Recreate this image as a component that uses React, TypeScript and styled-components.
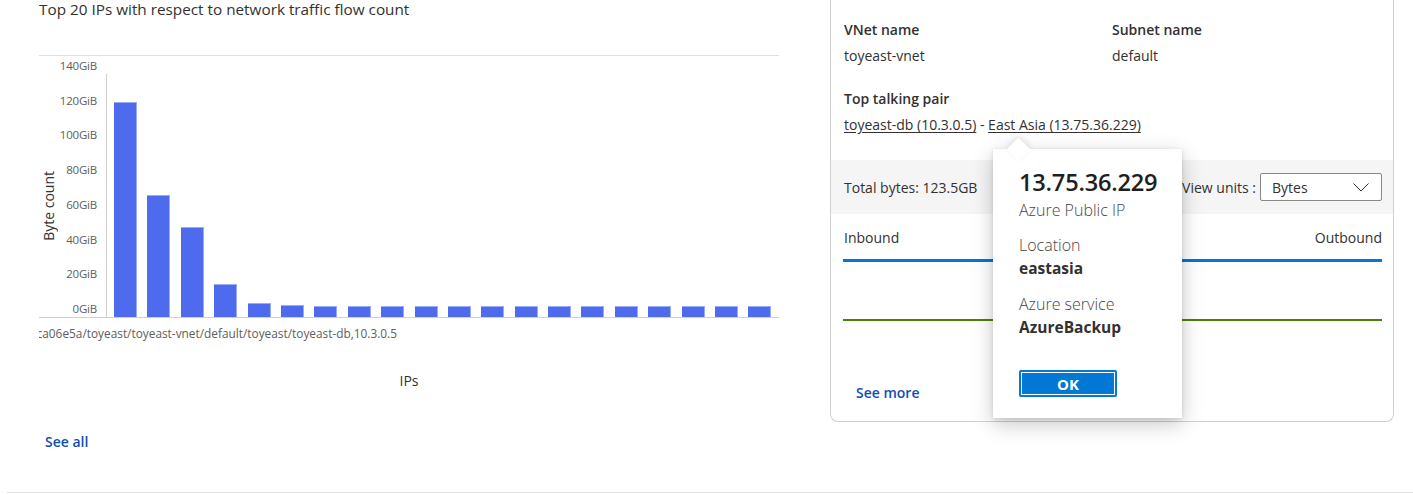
import styled, { createGlobalStyle } from 'styled-components';

const GlobalStyle = createGlobalStyle`
  body {
    margin: 0;
    font-family: 'Open Sans', 'Noto Sans', sans-serif;
    color: #323130;
    background: #fff;
  }
`;

const Page = styled.div`
  margin-left: 7px;
  width: 1406px;
  height: 492px;
  border-bottom: 1px solid #e1dfdd;
  overflow: hidden;
`;

const Main = styled.div`
  display: flex;
  align-items: flex-start;
`;

const LeftColumn = styled.div`
  padding-left: 32px;
  width: 740px;
  display: flex;
  flex-direction: column;
`;

const ChartTitle = styled.div`
  font-size: 15.3px;
  line-height: 18px;
  color: #323130;
`;

const Chart = styled.div`
  margin-top: 37px;
  border-top: 1px solid #e1dfdd;
  border-bottom: 1px solid #d2d0ce;
  height: 261px;
  display: flex;
  align-items: flex-end;
`;

const AxisTitle = styled.div`
  width: 17px;
  margin-bottom: 76px;
  writing-mode: vertical-rl;
  transform: rotate(180deg);
  font-size: 14px;
  color: #323130;
  white-space: nowrap;
`;

const TickColumn = styled.div`
  width: 41px;
  height: 259px;
  margin-right: 9px;
  display: flex;
  flex-direction: column;
  justify-content: space-between;
  align-items: flex-end;
`;

const Tick = styled.div`
  font-size: 11.5px;
  line-height: 16px;
  color: #605e5c;
  letter-spacing: -0.2px;
`;

const Plot = styled.div`
  flex: 1;
  height: 243px;
  border-left: 1px solid #d2d0ce;
  padding-left: 7px;
  display: flex;
  align-items: flex-end;
  gap: 10.4px;
`;

const Bar = styled.div`
  width: 23px;
  flex-shrink: 0;
  background: #4f6bed;
  box-shadow: inset -1px 1px 0 #9aabf5;
`;

/* the long resource id overflows its slot on the left, as in the portal */
const XTickLabel = styled.div`
  margin-top: 7px;
  width: 358px;
  overflow: hidden;
  display: flex;
  justify-content: flex-end;
  white-space: nowrap;
  font-size: 11.85px;
  line-height: 16px;
  color: #605e5c;
`;

const XAxisTitle = styled.div`
  margin-top: 30px;
  text-align: center;
  font-size: 14px;
  line-height: 20px;
  color: #323130;
`;

const Link = styled.a`
  color: #0f4fb2;
  font-weight: 600;
  font-size: 14px;
  line-height: 20px;
  text-decoration: none;
  cursor: pointer;
`;

const SeeAll = styled(Link)`
  margin-top: 41px;
  padding-left: 6px;
`;

const Card = styled.div`
  position: relative;
  margin-left: 51px;
  width: 564px;
  height: 422px;
  border: 1px solid #d2d0ce;
  border-top: none;
  border-radius: 0 0 8px 8px;
  display: flex;
  flex-direction: column;
  padding-top: 20px;
  box-sizing: border-box;
`;

const FieldGrid = styled.div`
  display: grid;
  grid-template-columns: 268px 1fr;
  padding-left: 13px;
  row-gap: 6px;
`;

const FieldLabel = styled.div`
  font-size: 14px;
  line-height: 20px;
  font-weight: 600;
  color: #323130;
`;

const FieldValue = styled.div`
  font-size: 14px;
  line-height: 20px;
  color: #323130;
`;

const PairBlock = styled.div`
  margin-top: 23px;
  padding-left: 13px;
  display: flex;
  flex-direction: column;
  gap: 6px;
`;

const Underlined = styled.span`
  text-decoration: underline;
  text-underline-offset: 2px;
`;

const Band = styled.div`
  margin-top: 25px;
  height: 54px;
  background: #f5f5f5;
  display: flex;
  align-items: center;
  justify-content: space-between;
  padding: 0 11px 0 13px;
`;

const TotalBytes = styled.div`
  font-size: 14px;
  font-weight: 500;
  color: #323130;
`;

const UnitsGroup = styled.div`
  display: flex;
  align-items: center;
  gap: 4px;
  font-size: 14px;
  font-weight: 500;
`;

const Dropdown = styled.div`
  width: 122px;
  height: 28px;
  box-sizing: border-box;
  border: 1px solid #8a8886;
  border-radius: 2px;
  background: #fff;
  display: flex;
  align-items: center;
  justify-content: space-between;
  padding: 1px 12px 0 11px;
  font-weight: 400;
  font-size: 14px;
  color: #323130;
`;

const DirectionRow = styled.div`
  margin-top: 14px;
  padding: 0 11px 0 13px;
  display: flex;
  justify-content: space-between;
  font-size: 14px;
  line-height: 20px;
  color: #323130;
`;

const FlowLine = styled.div<{ $color: string; $thick: number; $gap: number }>`
  margin: ${(p) => p.$gap}px 11px 0 12px;
  height: ${(p) => p.$thick}px;
  background: ${(p) => p.$color};
`;

const SeeMore = styled(Link)`
  margin-top: 62px;
  padding-left: 25px;
`;

const Callout = styled.div`
  position: absolute;
  left: 162px;
  top: 149px;
  width: 189px;
  height: 269px;
  box-sizing: border-box;
  background: #fff;
  box-shadow: 0 6px 20px rgba(0, 0, 0, 0.22), 0 1px 4px rgba(0, 0, 0, 0.12);
  padding: 17px 0 0 26px;
  display: flex;
  flex-direction: column;
  align-items: flex-start;

  &::before {
    content: '';
    position: absolute;
    left: 17px;
    top: -8px;
    width: 17px;
    height: 17px;
    background: #fff;
    transform: rotate(45deg);
    box-shadow: -2px -2px 6px rgba(0, 0, 0, 0.1);
  }
`;

const CalloutInner = styled.div`
  position: relative;
  display: flex;
  flex-direction: column;
  align-items: flex-start;
`;

const IpTitle = styled.div`
  font-size: 23.6px;
  line-height: 32px;
  font-weight: 600;
  color: #201f1e;
  letter-spacing: -0.2px;
`;

const LightText = styled.div<{ $gap: number }>`
  margin-top: ${(p) => p.$gap}px;
  font-size: 16px;
  line-height: 22px;
  font-weight: 300;
  color: #484644;
`;

const StrongText = styled.div`
  margin-top: 1px;
  font-size: 15.5px;
  line-height: 22px;
  font-weight: 700;
  color: #323130;
`;

const OkButton = styled.button`
  margin-top: 32px;
  width: 98px;
  height: 27px;
  border: none;
  border-radius: 2px;
  background: #0078d4;
  color: #fff;
  font-family: inherit;
  font-size: 15px;
  font-weight: 700;
  outline: 1px solid #fff;
  outline-offset: -3px;
  cursor: pointer;
`;

const ticks = ['140GiB', '120GiB', '100GiB', '80GiB', '60GiB', '40GiB', '20GiB', '0GiB'];
const bars = [215, 122, 90, 33, 14, 12, 11, 11, 11, 11, 11, 11, 11, 11, 11, 11, 11, 11, 11, 11];

function Chevron() {
  return (
    <svg width="16" height="9" viewBox="0 0 16 9" fill="none">
      <path d="M0.5 0.5 L8 8 L15.5 0.5" stroke="#323130" strokeWidth="1" />
    </svg>
  );
}

export default function App() {
  return (
    <>
      <GlobalStyle />
      <Page>
        <Main>
          <LeftColumn>
            <ChartTitle>Top 20 IPs with respect to network traffic flow count</ChartTitle>
            <Chart>
              <AxisTitle>Byte count</AxisTitle>
              <TickColumn>
                {ticks.map((t) => (
                  <Tick key={t}>{t}</Tick>
                ))}
              </TickColumn>
              <Plot>
                {bars.map((h, i) => (
                  <Bar key={i} style={{ height: h }} />
                ))}
              </Plot>
            </Chart>
            <XTickLabel>
              <span>7c25ca06e5a/toyeast/toyeast-vnet/default/toyeast/toyeast-db,10.3.0.5</span>
            </XTickLabel>
            <XAxisTitle>IPs</XAxisTitle>
            <SeeAll>See all</SeeAll>
          </LeftColumn>

          <Card>
            <FieldGrid>
              <FieldLabel>VNet name</FieldLabel>
              <FieldLabel>Subnet name</FieldLabel>
              <FieldValue>toyeast-vnet</FieldValue>
              <FieldValue>default</FieldValue>
            </FieldGrid>
            <PairBlock>
              <FieldLabel>Top talking pair</FieldLabel>
              <FieldValue>
                <Underlined>toyeast-db (10.3.0.5)</Underlined> - <Underlined>East Asia (13.75.36.229)</Underlined>
              </FieldValue>
            </PairBlock>
            <Band>
              <TotalBytes>Total bytes: 123.5GB</TotalBytes>
              <UnitsGroup>
                View units :
                <Dropdown>
                  Bytes
                  <Chevron />
                </Dropdown>
              </UnitsGroup>
            </Band>
            <DirectionRow>
              <span>Inbound</span>
              <span>Outbound</span>
            </DirectionRow>
            <FlowLine $color="#0078d4" $thick={3} $gap={11} />
            <FlowLine $color="#498205" $thick={2} $gap={57} />
            <SeeMore>See more</SeeMore>

            <Callout>
              <CalloutInner>
                <IpTitle>13.75.36.229</IpTitle>
                <LightText $gap={1}>Azure Public IP</LightText>
                <LightText $gap={13}>Location</LightText>
                <StrongText>eastasia</StrongText>
                <LightText $gap={14}>Azure service</LightText>
                <StrongText>AzureBackup</StrongText>
                <OkButton>OK</OkButton>
              </CalloutInner>
            </Callout>
          </Card>
        </Main>
      </Page>
    </>
  );
}
